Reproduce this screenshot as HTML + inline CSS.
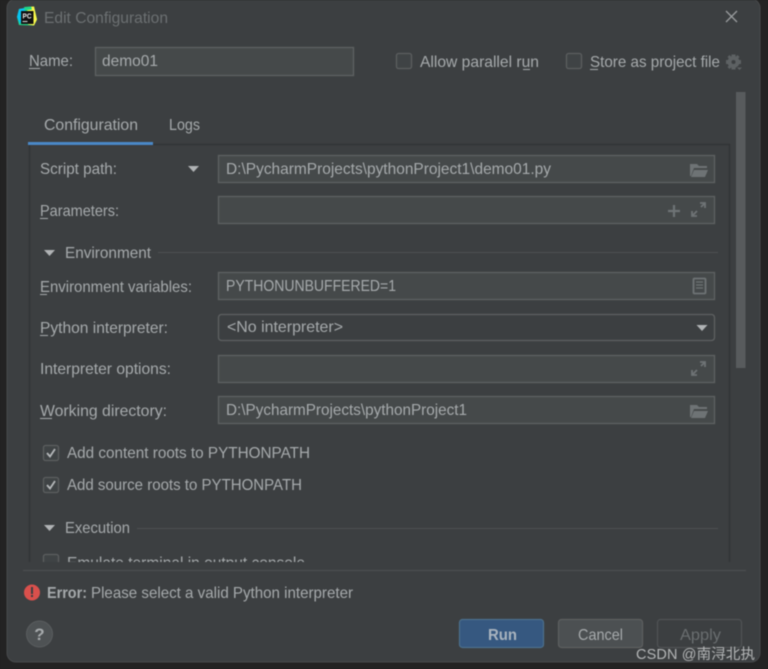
<!DOCTYPE html>
<html><head><meta charset="utf-8"><title>Edit Configuration</title>
<style>
html,body{margin:0;padding:0;background:#232323;width:768px;height:669px;overflow:hidden}
svg{display:block;position:absolute;left:0;top:0;filter:blur(0.4px)}
text{font-family:"Liberation Sans","Noto Sans CJK SC",sans-serif;font-size:16px;fill:#a6aaac}
.f{fill:#45494a;stroke:#5e6162;stroke-width:1.3}
.c{fill:#3f4345;stroke:#5c5f60;stroke-width:1.3}
.ic{fill:#6e7375}
.u{stroke:#a6aaac;stroke-width:1}
</style></head><body>
<svg width="768" height="669" viewBox="0 0 768 669" xmlns="http://www.w3.org/2000/svg">
<defs><clipPath id="cl"><rect x="0" y="0" width="768" height="562"/></clipPath></defs>
<rect width="768" height="669" fill="#232323"/>
<rect x="7" y="-1" width="753" height="663" rx="9" fill="#3c3f41" stroke="#484a4c" stroke-width="1"/>

<!-- title -->
<g>
<path d="M19 9l15-2.500 3 13-3 6-15-.5-2-8z" fill="#21d789"/>
<path d="M27 7l7-.5 3 13-3 6-6-1z" fill="#fcf84a"/>
<path d="M17 17l2-8 6-1 0 6-5 10z" fill="#07c3f2"/>
<path d="M24 7l7-.5 1 3-7 1z" fill="#21d789"/>
<rect x="21" y="11" width="12.500" height="13" fill="#111"/>
<text x="22.500" y="18.500" style="font-size:7.500px;font-weight:bold;fill:#eee" textLength="9" lengthAdjust="spacingAndGlyphs">PC</text>
<rect x="22.500" y="21" width="5" height="1" fill="#ddd"/>
</g>
<text x="44" y="23" textLength="124" lengthAdjust="spacingAndGlyphs" style="fill:#6c7072">Edit Configuration</text>
<path d="M726 11l11 11M737 11l-11 11" stroke="#999c9e" stroke-width="1.300" fill="none"/>

<!-- name row -->
<text x="29" y="66" textLength="44" lengthAdjust="spacingAndGlyphs">Name:</text>
<line x1="29" y1="68.500" x2="40" y2="68.500" class="u"/>
<rect x="95.500" y="47.500" width="258" height="28" class="f"/>
<text x="102" y="66" textLength="56" lengthAdjust="spacingAndGlyphs">demo01</text>
<rect x="396.500" y="53.500" width="15" height="15" rx="2" class="c"/>
<text x="420" y="67" textLength="119" lengthAdjust="spacingAndGlyphs">Allow parallel run</text>
<line x1="523" y1="69.500" x2="530" y2="69.500" class="u"/>
<rect x="566.500" y="53.500" width="15" height="15" rx="2" class="c"/>
<text x="590" y="67" textLength="130" lengthAdjust="spacingAndGlyphs">Store as project file</text>
<line x1="590" y1="69.500" x2="598" y2="69.500" class="u"/>
<!-- gear -->
<g fill="#5d6163">
<circle cx="733.500" cy="62" r="4" fill="none" stroke="#5d6163" stroke-width="4"/>
<path d="M731.500 54.500h4v2.500h-4zM731.500 67h4v2.500h-4zM726 60h2.500v4h-2.500zM738.500 60h2.500v4h-2.500z"/>
<path d="M727.500 57l2-2 2 2-2 2zM737.500 55l2 2-2 2-2-2zM727.500 67l2-2 2 2-2 2z"/>
<path d="M737 67.500h5l-2.500 2.500z"/>
</g>

<!-- tabs -->
<text x="44" y="130" textLength="94" lengthAdjust="spacingAndGlyphs">Configuration</text>
<text x="169" y="130" textLength="31" lengthAdjust="spacingAndGlyphs">Logs</text>
<path d="M29.500 562V144.500H729.500V562" fill="none" stroke="#323436" stroke-width="1.500"/>
<rect x="28" y="142" width="125" height="3" fill="#4a88c7"/>
<rect x="736" y="92" width="9.500" height="276" fill="#585b5d"/>

<!-- form -->
<text x="40" y="174" textLength="77" lengthAdjust="spacingAndGlyphs">Script path:</text>
<path d="M188 166h11l-5.500 6z" fill="#b0b3b5"/>
<rect x="218.500" y="155.500" width="496" height="27" class="f"/>
<text x="226" y="174" textLength="325" lengthAdjust="spacingAndGlyphs">D:\PycharmProjects\pythonProject1\demo01.py</text>
<g class="ic"><path d="M690 164h7l2 2h8v2h-13l-3 8h-1zM694 170h14l-3 7h-14z"/></g>

<text x="40" y="216" textLength="79" lengthAdjust="spacingAndGlyphs">Parameters:</text>
<line x1="40" y1="218.500" x2="48" y2="218.500" class="u"/>
<rect x="218.500" y="196.500" width="496" height="27" class="f"/>
<path d="M674 205v12M668 211h12" stroke="#6e7375" stroke-width="2.200"/>
<path d="M692 216l5-5M701 207l4-4M700 203h5v5M692 211v5h5" stroke="#6e7375" stroke-width="1.800" fill="none"/>

<path d="M44 250h11l-5.500 6z" fill="#b0b3b5"/>
<text x="65" y="258" textLength="86" lengthAdjust="spacingAndGlyphs">Environment</text>
<line x1="158" y1="252.500" x2="718" y2="252.500" stroke="#4e5153" stroke-width="1"/>

<text x="40" y="292" textLength="152" lengthAdjust="spacingAndGlyphs">Environment variables:</text>
<line x1="40" y1="294.500" x2="47" y2="294.500" class="u"/>
<rect x="218.500" y="272.500" width="496" height="27" class="f"/>
<text x="226" y="291" textLength="170" lengthAdjust="spacingAndGlyphs">PYTHONUNBUFFERED=1</text>
<rect x="693.500" y="278.500" width="12" height="15" rx="1" fill="none" stroke="#6e7375" stroke-width="1.800"/>
<path d="M696 282h7M696 285h7M696 288h7" stroke="#6e7375" stroke-width="1.300"/>

<text x="40" y="333" textLength="128" lengthAdjust="spacingAndGlyphs">Python interpreter:</text>
<line x1="40" y1="335.500" x2="48" y2="335.500" class="u"/>
<rect x="218.500" y="314.500" width="496" height="26" rx="3" fill="#3c3f41" stroke="#5e6162" stroke-width="1.300"/>
<text x="227" y="332" textLength="116" lengthAdjust="spacingAndGlyphs">&lt;No interpreter&gt;</text>
<path d="M696.500 325h11l-5.500 6z" fill="#b0b3b5"/>

<text x="40" y="374" textLength="131" lengthAdjust="spacingAndGlyphs">Interpreter options:</text>
<rect x="218.500" y="355.500" width="496" height="27" class="f"/>
<path d="M692 375l5-5M701 366l4-4M700 362h5v5M692 370v5h5" stroke="#6e7375" stroke-width="1.800" fill="none"/>

<text x="40" y="416" textLength="127" lengthAdjust="spacingAndGlyphs">Working directory:</text>
<line x1="40" y1="418.500" x2="52" y2="418.500" class="u"/>
<rect x="218.500" y="396.500" width="496" height="27" class="f"/>
<text x="226" y="415" textLength="241" lengthAdjust="spacingAndGlyphs">D:\PycharmProjects\pythonProject1</text>
<g class="ic"><path d="M690 405h7l2 2h8v2h-13l-3 8h-1zM694 411h14l-3 7h-14z"/></g>

<rect x="43.500" y="445.500" width="15" height="15" rx="2" class="c"/>
<path d="M47 453l3 3.500 5-7.500" stroke="#b4b7b9" stroke-width="1.800" fill="none"/>
<text x="67" y="458" textLength="243" lengthAdjust="spacingAndGlyphs">Add content roots to PYTHONPATH</text>
<rect x="43.500" y="477.500" width="15" height="15" rx="2" class="c"/>
<path d="M47 485l3 3.500 5-7.500" stroke="#b4b7b9" stroke-width="1.800" fill="none"/>
<text x="67" y="490" textLength="235" lengthAdjust="spacingAndGlyphs">Add source roots to PYTHONPATH</text>

<path d="M44 525h11l-5.500 6z" fill="#b0b3b5"/>
<text x="65" y="533" textLength="65" lengthAdjust="spacingAndGlyphs">Execution</text>
<line x1="137" y1="528.500" x2="718" y2="528.500" stroke="#4e5153" stroke-width="1"/>

<g clip-path="url(#cl)">
<rect x="43.500" y="554.500" width="15" height="15" rx="2" class="c"/>
<text x="67" y="568" textLength="238" lengthAdjust="spacingAndGlyphs">Emulate terminal in output console</text>
</g>

<!-- footer -->
<line x1="23" y1="570.500" x2="746" y2="570.500" stroke="#4b4e50" stroke-width="1.200"/>
<circle cx="32" cy="592.500" r="8" fill="#d9504c"/>
<rect x="31" y="587" width="2" height="7" fill="#3c3f41"/>
<rect x="31" y="595" width="2" height="2" fill="#3c3f41"/>
<text x="47" y="598" textLength="40" lengthAdjust="spacingAndGlyphs" style="font-weight:bold">Error:</text>
<text x="91" y="598" textLength="262" lengthAdjust="spacingAndGlyphs">Please select a valid Python interpreter</text>

<circle cx="39.500" cy="634" r="13" fill="#4e5254" stroke="#5a5d5f"/>
<text x="39.500" y="640" text-anchor="middle" style="font-size:17px;font-weight:bold;fill:#a6aaac">?</text>

<rect x="459.500" y="619.500" width="84" height="28" rx="3" fill="#365880" stroke="#4c708c" stroke-width="1.200"/>
<text x="488" y="640" textLength="29" lengthAdjust="spacingAndGlyphs" style="font-weight:bold;fill:#a9b4bf">Run</text>
<rect x="558.500" y="619.500" width="84" height="28" rx="3" fill="#4c5052" stroke="#5e6060" stroke-width="1.200"/>
<text x="578" y="640" textLength="45" lengthAdjust="spacingAndGlyphs">Cancel</text>
<rect x="657.500" y="619.500" width="84" height="28" rx="3" fill="#3c3f41" stroke="#505355" stroke-width="1.200"/>
<text x="680" y="640" textLength="41" lengthAdjust="spacingAndGlyphs" style="fill:#6a6e70">Apply</text>

<text x="636" y="659" textLength="119" style="fill:#b4b6b7;font-size:14.500px">CSDN @南浔北执</text>
</svg>
</body></html>
